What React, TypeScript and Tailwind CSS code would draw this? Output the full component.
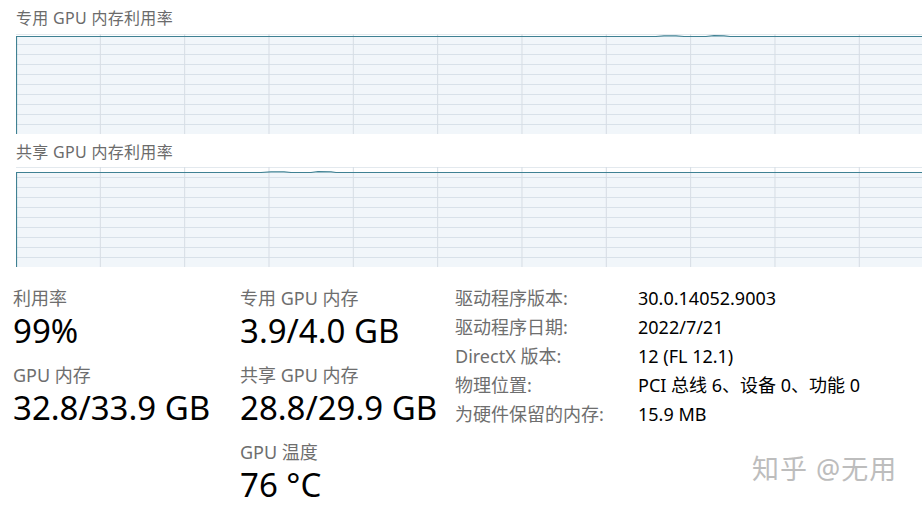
const font = "font-['Noto_Sans','Noto_Sans_CJK_SC',sans-serif]";

type Pt = [number, number];

function Chart({ line }: { line: Pt[] }) {
  const w = 906;
  const h = 100;
  const vLines = Array.from({ length: 10 }, (_, i) => 84.33 * (i + 1));
  const hLines = Array.from({ length: 9 }, (_, i) => 10 * (i + 1));
  const pts = line.map(([x, y]) => `${x},${y}`).join(' ');
  return (
    <svg width={w} height={h} viewBox={`0 0 ${w} ${h}`} className="block">
      <line x1={0} y1={0.5} x2={w} y2={0.5} stroke="#e3e9ee" />
      <polygon points={`0.5,${h} ${pts} ${w},${h}`} fill="#f1f6fa" />
      {hLines.map((y) => (
        <line key={y} x1={0} y1={y + 0.5} x2={w} y2={y + 0.5} stroke="#d8e1e9" />
      ))}
      {vLines.map((x) => (
        <line key={x} x1={x} y1={0} x2={x} y2={h} stroke="#d6dde4" />
      ))}
      <polyline points={`0.5,${h} ${pts}`} fill="none" stroke="#3f8193" strokeWidth={1.2} />
    </svg>
  );
}

function Stat({ label, value }: { label: string; value: string }) {
  return (
    <div className="mb-[15px]">
      <div className="text-[18px] leading-[22px] text-[#6e6e6e]">{label}</div>
      <div className="mt-[4px] text-[33px] leading-[36px] text-black">{value}</div>
    </div>
  );
}

const info: [string, string][] = [
  ['驱动程序版本:', '30.0.14052.9003'],
  ['驱动程序日期:', '2022/7/21'],
  ['DirectX 版本:', '12 (FL 12.1)'],
  ['物理位置:', 'PCI 总线 6、设备 0、功能 0'],
  ['为硬件保留的内存:', '15.9 MB'],
];

export default function App() {
  const line1: Pt[] = [
    [0.5, 2.5], [640, 2.5], [648, 1.8], [660, 1.8], [668, 2.5], [690, 2.5], [698, 1.6], [708, 1.8], [714, 2.5], [906, 2.5],
  ];
  const line2: Pt[] = [
    [0.5, 5.5], [245, 5.5], [255, 4.8], [268, 4.8], [275, 5.5], [295, 5.5], [302, 4.6], [315, 4.8], [320, 5.5], [906, 5.5],
  ];

  return (
    <div className={`relative w-[922px] h-[511px] overflow-hidden bg-white ${font}`}>
      <div className="pl-4 pt-[8px]">
        <div className="text-[16px] leading-[20px] tracking-[0.3px] text-[#6b6b6b]">专用 GPU 内存利用率</div>
        <div className="mt-[6px]">
          <Chart line={line1} />
        </div>
        <div className="mt-[8px] text-[16px] leading-[20px] tracking-[0.3px] text-[#6b6b6b]">共享 GPU 内存利用率</div>
        <div className="mt-[5px]">
          <Chart line={line2} />
        </div>
      </div>

      <div className="mt-[20px] flex items-start">
        <div className="w-[240px] pl-[13px]">
          <Stat label="利用率" value="99%" />
          <Stat label="GPU 内存" value="32.8/33.9 GB" />
        </div>
        <div className="w-[215px]">
          <Stat label="专用 GPU 内存" value="3.9/4.0 GB" />
          <Stat label="共享 GPU 内存" value="28.8/29.9 GB" />
          <Stat label="GPU 温度" value="76 °C" />
        </div>
        <div className="-mt-[3px] grid grid-cols-[183px_1fr] content-start text-[18px] leading-[29px]">
          {info.map(([k, v]) => (
            <div key={k} className="contents">
              <div className="text-[#6e6e6e]">{k}</div>
              <div className="text-black">{v}</div>
            </div>
          ))}
        </div>
      </div>

      <div className="absolute left-[752px] top-[453px] text-[27px] leading-[32px] tracking-[1px] text-[#bdbdbd]">
        知乎 @无用
      </div>
    </div>
  );
}
